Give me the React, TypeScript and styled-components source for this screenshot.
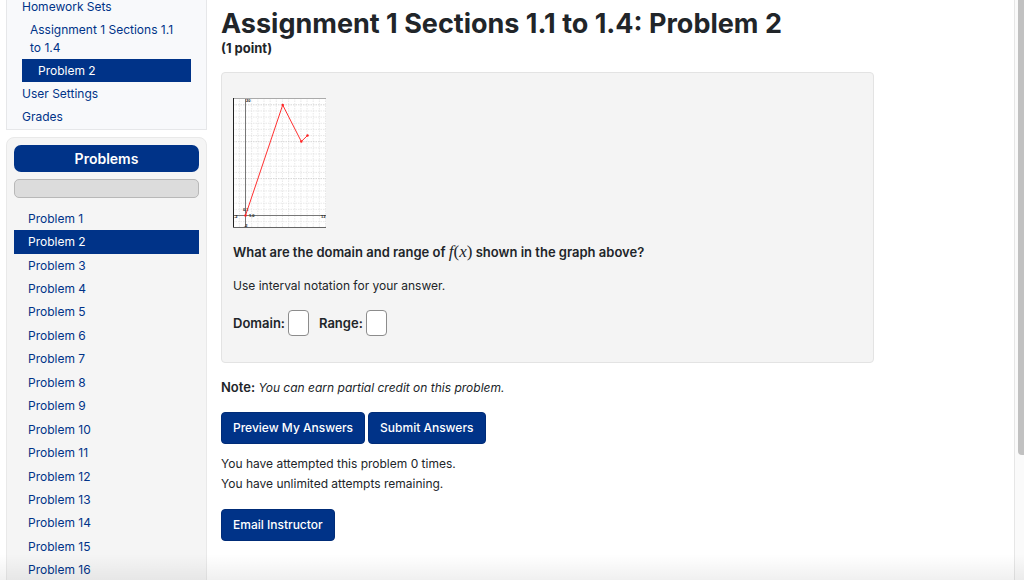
import React from "react";
import styled, { createGlobalStyle } from "styled-components";

const navy = "#003388";
const ink = "#212529";

const GlobalStyle = createGlobalStyle`
  *, *::before, *::after { box-sizing: border-box; }
  body {
    margin: 0;
    background: #fff;
    color: ${ink};
    font-family: Inter, "Liberation Sans", sans-serif;
    font-size: 12px;
    line-height: 20px;
  }
  p, h1, h2, ul { margin: 0; padding: 0; }
`;

const Viewport = styled.div`
  position: relative;
  display: flex;
  height: 100vh;
  overflow: hidden;
`;

const Page = styled.div`
  flex: 1;
  min-width: 0;
  display: flex;
  align-items: flex-start;
  gap: 14px;
  padding-left: 6px;
`;

const Sidebar = styled.aside`
  flex: none;
  width: 201px;
  margin-top: -6px;
  display: flex;
  flex-direction: column;
  gap: 7px;
`;

const SiteNav = styled.nav`
  padding: 0 15px 1px;
  background: #f8f9fb;
  border: 1px solid #e6e7e9;
`;

const NavLink = styled.a<{ $level?: number; $active?: boolean }>`
  display: block;
  padding: 3px 10px 2px ${(p) => (p.$level ?? 0) * 8}px;
  line-height: 18px;
  text-decoration: none;
  color: ${(p) => (p.$active ? "#fff" : navy)};
  background: ${(p) => (p.$active ? navy : "transparent")};
`;

const ProblemsCard = styled.section`
  padding: 7px;
  background: #f5f5f5;
  border: 1px solid #e9e9e9;
  border-radius: 8px;
`;

const CardTitle = styled.h2`
  background: ${navy};
  color: #fff;
  border-radius: 7px;
  font-size: 14px;
  font-weight: 600;
  line-height: 27px;
  text-align: center;
`;

const ProgressTrack = styled.div`
  height: 19px;
  margin: 7px 0 9px;
  background: #dcdcdc;
  border: 1px solid #b8b8b8;
  border-radius: 5px;
`;

const ProblemList = styled.ul`
  display: grid;
  grid-auto-rows: 1fr;
  min-height: 375px;
  list-style: none;
`;

const ProblemLink = styled.a<{ $active?: boolean }>`
  display: flex;
  align-items: center;
  height: 100%;
  padding-left: 14px;
  text-decoration: none;
  color: ${(p) => (p.$active ? "#fff" : navy)};
  background: ${(p) => (p.$active ? navy : "transparent")};
`;

const Main = styled.main`
  flex: 1;
  min-width: 0;
  padding: 8px 140px 0 0;
`;

const Title = styled.h1`
  font-size: 27px;
  font-weight: 700;
  line-height: 32px;
`;

const Strong = styled.strong`
  font-size: 13px;
  font-weight: 600;
`;

const Points = styled.p`
  font-size: 13px;
  font-weight: 700;
  line-height: 17px;
`;

const ProblemPanel = styled.section`
  margin-top: 15px;
  padding: 25px 11px 26px;
  background: #f4f4f4;
  border: 1px solid #e3e3e3;
  border-radius: 4px;
`;

const Graph = styled.svg`
  display: block;
`;

const Question = styled.p`
  margin-top: 14px;
  font-size: 13px;
  font-weight: 600;
`;

const MathText = styled.i`
  font-family: "Liberation Serif", serif;
  font-size: 17px;
  font-weight: 400;
  line-height: 16px;
`;

const Upright = styled.span`
  font-style: normal;
`;

const Instruction = styled.p`
  margin-top: 14px;
`;

const Answers = styled.div`
  display: flex;
  gap: 10px;
  margin-top: 14px;
`;

const AnswerField = styled.label`
  display: flex;
  align-items: center;
  gap: 3px;
  font-size: 13px;
  font-weight: 600;
`;

const AnswerInput = styled.input`
  width: 21px;
  height: 26px;
  padding: 2px;
  background: #fff;
  border: 1px solid #8c8c8c;
  border-radius: 4px;
`;

const Note = styled.p`
  margin-top: 14px;
`;

const ButtonRow = styled.div`
  display: flex;
  gap: 3px;
  margin: 14px 0 10px;
`;

const Button = styled.button`
  padding: 5px 11px;
  background: ${navy};
  border: 1px solid #002c78;
  border-radius: 4px;
  color: #fff;
  font: inherit;
  font-weight: 500;
`;

const Attempts = styled.p`
  margin-bottom: 15px;
`;

const ScrollTrack = styled.div`
  flex: none;
  width: 10px;
  padding-left: 3px;
  background: #fafafa;
  border-left: 1px solid #e6e6e6;
`;

const ScrollThumb = styled.div`
  height: 78.4%;
  background: #c1c1c1;
  border-radius: 0 0 0 4px;
`;

const BottomShade = styled.div`
  position: absolute;
  left: 0;
  right: 0;
  bottom: 0;
  height: 26px;
  background: linear-gradient(rgba(0, 0, 0, 0), rgba(0, 0, 0, 0.06));
  pointer-events: none;
`;

const problems = Array.from({ length: 16 }, (_, i) => i + 1);
const verticals = Array.from({ length: 15 }, (_, i) => 6.4 + i * 6.15);
const horizontals = Array.from({ length: 20 }, (_, i) => 6.8 + i * 6.15);

function FunctionGraph() {
  return (
    <Graph width="93" height="130" viewBox="0 0 93 130" role="img" aria-label="Graph of f(x)">
      <rect width="93" height="130" fill="#fff" />
      <g stroke="#dedede" strokeWidth="0.7" strokeDasharray="1.5 1">
        {verticals.map((x) => (
          <line key={x} x1={x} x2={x} y1="0" y2="129" />
        ))}
        {horizontals.map((y, i) => (
          <line key={y} x1="0" x2="93" y1={y} y2={y} stroke={i % 6 === 0 ? "#c4c4c4" : "#dedede"} />
        ))}
      </g>
      <path d="M12.5 0V129M0 117.5H93" stroke="#777" fill="none" />
      <path d="M0 0.5H93" stroke="#aaa" fill="none" />
      <path d="M0.5 0V130" stroke="#222" fill="none" />
      <path d="M0 129.5H93" stroke="#666" fill="none" />
      <g fill="#111" fontSize="4" fontWeight="700" fontFamily="Liberation Sans, sans-serif">
        <text x="13" y="4">20</text>
        <text x="1" y="120">-2</text>
        <text x="88" y="120">13</text>
        <text x="11" y="129">-2</text>
        <text x="10" y="113">0,1</text>
        <text x="16" y="119">1,0</text>
      </g>
      <path d="M12.5 117.5L49.7 7L68.3 43.5L74.5 37.5" stroke="#ff3030" fill="none" />
      <g fill="#f22">
        <circle cx="12.5" cy="117.5" r="1.2" />
        <circle cx="49.7" cy="7" r="1.2" />
        <circle cx="68.3" cy="43.5" r="1.2" />
        <circle cx="74.5" cy="37.5" r="1.2" />
      </g>
    </Graph>
  );
}

export default function App() {
  return (
    <>
      <GlobalStyle />
      <Viewport>
        <Page>
          <Sidebar>
            <SiteNav aria-label="Site">
              <NavLink href="#sets">Homework Sets</NavLink>
              <NavLink href="#set-1" $level={1}>Assignment 1 Sections 1.1 to 1.4</NavLink>
              <NavLink href="#problem-2" $level={2} $active>Problem 2</NavLink>
              <NavLink href="#settings">User Settings</NavLink>
              <NavLink href="#grades">Grades</NavLink>
            </SiteNav>
            <ProblemsCard>
              <CardTitle>Problems</CardTitle>
              <ProgressTrack />
              <ProblemList>
                {problems.map((n) => (
                  <li key={n}>
                    <ProblemLink href={`#problem-${n}`} $active={n === 2}>Problem {n}</ProblemLink>
                  </li>
                ))}
              </ProblemList>
            </ProblemsCard>
          </Sidebar>
          <Main>
            <Title>Assignment 1 Sections 1.1 to 1.4: Problem 2</Title>
            <Points>(1 point)</Points>
            <ProblemPanel>
              <FunctionGraph />
              <Question>
                What are the domain and range of{" "}
                <MathText>f<Upright>(</Upright>x<Upright>)</Upright></MathText> shown in the graph above?
              </Question>
              <Instruction>Use interval notation for your answer.</Instruction>
              <Answers>
                <AnswerField>Domain: <AnswerInput type="text" /></AnswerField>
                <AnswerField>Range: <AnswerInput type="text" /></AnswerField>
              </Answers>
            </ProblemPanel>
            <Note><Strong>Note:</Strong> <em>You can earn partial credit on this problem.</em></Note>
            <ButtonRow>
              <Button type="button">Preview My Answers</Button>
              <Button type="submit">Submit Answers</Button>
            </ButtonRow>
            <Attempts>You have attempted this problem 0 times.<br />You have unlimited attempts remaining.</Attempts>
            <ButtonRow>
              <Button type="button">Email Instructor</Button>
            </ButtonRow>
          </Main>
        </Page>
        <ScrollTrack><ScrollThumb /></ScrollTrack>
        <BottomShade />
      </Viewport>
    </>
  );
}
